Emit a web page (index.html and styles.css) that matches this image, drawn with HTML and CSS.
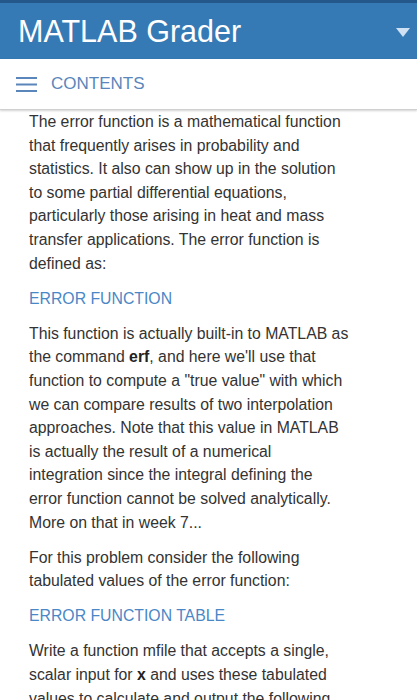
FILE: index.html
```html
<!DOCTYPE html>
<html>
<head>
<meta charset="utf-8">
<link rel="stylesheet" href="styles.css">
</head>
<body>
<header class="topbar">
  <h1 class="title">MATLAB Grader</h1>
  <span class="caret"></span>
</header>
<nav class="contents-bar">
  <svg class="burger" width="21" height="16" viewBox="0 0 21 16"><rect x="0" y="1" width="21" height="2" fill="#5a86bb"/><rect x="0" y="7.5" width="21" height="2" fill="#5a86bb"/><rect x="0" y="14" width="21" height="2" fill="#5a86bb"/></svg>
  <span class="contents-label">CONTENTS</span>
</nav>
<main class="content">
  <p>The error function is a mathematical function that frequently arises in probability and statistics. It also can show up in the solution to some partial differential equations, particularly those arising in heat and mass transfer applications. The error function is defined as:</p>
  <h2 class="section">ERROR FUNCTION</h2>
  <p>This function is actually built-in to MATLAB as the command <b>erf</b>, and here we'll use that function to compute a "true value" with which we can compare results of two interpolation approaches. Note that this value in MATLAB is actually the result of a numerical integration&nbsp;since the integral defining the error&nbsp;function cannot be solved analytically. More on that in week 7...</p>
  <p>For this problem consider the following tabulated values of the error function:</p>
  <h2 class="section">ERROR FUNCTION TABLE</h2>
  <p>Write a function mfile that accepts a single, scalar input for <b>x</b> and uses these tabulated values to calculate and output the following approximations of the error function.</p>
</main>
</body>
</html>
```
FILE: styles.css
```css
html, body {
  margin: 0;
  padding: 0;
  background: #ffffff;
  height: 700px;
  overflow: hidden;
  font-family: "Liberation Sans", Arial, sans-serif;
}
.topbar {
  display: flex;
  align-items: center;
  justify-content: space-between;
  height: 56px;
  background: #357ab5;
  border-top: 3px solid #24588a;
  padding: 0 7px 0 18px;
}
.title {
  margin: 0;
  font-weight: normal;
  font-size: 30.5px;
  color: #ffffff;
}
.caret {
  width: 0;
  height: 0;
  border-left: 7px solid transparent;
  border-right: 7px solid transparent;
  border-top: 9px solid #cfe1f3;
  margin-top: 2px;
}
.contents-bar {
  display: flex;
  align-items: center;
  height: 50px;
  padding-left: 16px;
  border-bottom: 1px solid #d0d0d0;
  box-shadow: 0 1px 2px rgba(0,0,0,0.18);
  position: relative;
  z-index: 1;
}
.burger {
  display: block;
}
.contents-label {
  margin-left: 14px;
  font-size: 17px;
  color: #5a86bb;
}
.content {
  width: 322px;
  padding: 0 0 0 29px;
  color: #333333;
  font-size: 15.8px;
  line-height: 23.6px;
}
.content p {
  margin: 0 0 11.5px 0;
}
.content b {
  font-weight: bold;
  color: #222;
}
.section {
  margin: 0 0 11.5px 0;
  font-size: 15.8px;
  font-weight: normal;
  line-height: 23.6px;
  color: #4a87c6;
}
```
